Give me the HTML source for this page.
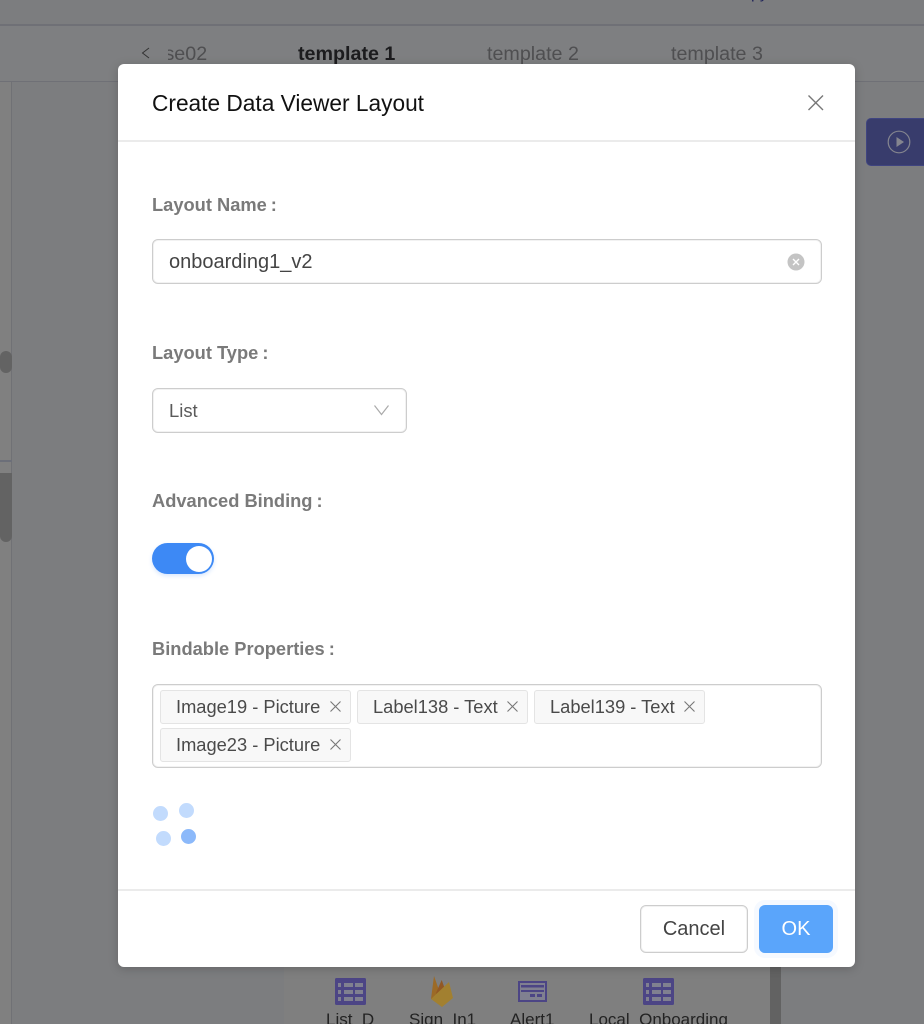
<!DOCTYPE html>
<html>
<head>
<meta charset="utf-8">
<style>
html,body{margin:0;padding:0;width:924px;height:1024px;overflow:hidden;}
#root{width:924px;height:1024px;position:relative;overflow:hidden;background:#7c7d7f;font-family:"Liberation Sans",sans-serif;}
.a{position:absolute;white-space:nowrap;}
.lab{left:152px;font-size:18.3px;font-weight:bold;color:#7a7a7a;line-height:22px;}
.box{position:absolute;box-sizing:border-box;background:#fff;border:1px solid #cdcdcd;box-shadow:inset 0 0 0 1px #f2f2f2;border-radius:6px;}
.tag{position:absolute;box-sizing:border-box;height:34px;background:#f8f8f8;border:1px solid #e4e4e4;border-radius:3px;font-size:18.3px;color:#4a4a4a;line-height:32px;padding-left:15px;white-space:nowrap;}
.tag svg{position:absolute;top:9px;right:8px;}
.dot{position:absolute;width:15px;height:15px;border-radius:50%;background:#c2dbfd;}
.tab{font-size:19.7px;line-height:24px;color:#4f4f51;top:42px;}
.bl{top:1010px;font-size:17px;line-height:20px;color:#232323;}
</style>
</head>
<body>
<div id="root">
<!-- background -->
<div class="a" style="left:0;top:24px;width:924px;height:2px;background:#6f7076;"></div>
<div class="a" style="left:0;top:26px;width:924px;height:55px;background:#7e7f81;"></div>
<div class="a" style="left:0;top:81px;width:924px;height:1px;background:#6f7076;"></div>
<div class="a" style="left:0;top:82px;width:11px;height:942px;background:#808080;"></div>
<div class="a" style="left:11px;top:82px;width:1px;height:942px;background:#707175;"></div>
<div class="a" style="left:0;top:351px;width:12px;height:22px;background:#636363;border-radius:6px;"></div>
<div class="a" style="left:0;top:460px;width:12px;height:2px;background:#6c6f79;"></div>
<div class="a" style="left:0;top:473px;width:12px;height:69px;background:#636363;border-radius:0 0 6px 6px;"></div>
<div class="a" style="left:751px;top:-14px;font-size:16px;color:#20245a;line-height:1;">py</div>

<svg class="a" style="left:140px;top:46px;" width="12" height="16" viewBox="0 0 12 16"><path d="M9 2L2.5 7L9 12" fill="none" stroke="#333" stroke-width="1"/></svg>
<div class="a tab" style="left:168px;width:40px;overflow:hidden;"><span style="margin-left:-14.5px;">ase02</span></div>
<div class="a tab" style="left:298px;font-weight:bold;color:#1c1c1e;">template 1</div>
<div class="a tab" style="left:487px;">template 2</div>
<div class="a tab" style="left:671px;">template 3</div>

<div class="a" style="left:866px;top:118px;width:70px;height:48px;background:#383c6c;border-radius:5px;box-sizing:border-box;border:1px solid #3f4480;"></div>
<svg class="a" style="left:887px;top:130px;" width="24" height="24" viewBox="0 0 24 24"><circle cx="12" cy="12" r="10.8" fill="none" stroke="#84858f" stroke-width="1.2"/><path d="M9.5 7L17 12L9.5 17Z" fill="#84858f"/></svg>

<!-- bottom area -->
<div class="a" style="left:284px;top:960px;width:486px;height:64px;background:#7f7f7f;"></div>
<div class="a" style="left:770px;top:960px;width:11px;height:64px;background:#626262;"></div>
<svg class="a" style="left:335px;top:978px;" width="31" height="28" viewBox="0 0 31 28"><rect width="31" height="27" rx="1.5" fill="#4c4585"/><g fill="#808090"><rect x="3" y="5" width="3" height="4"/><rect x="9" y="5" width="9" height="4"/><rect x="20" y="5" width="8" height="4"/><rect x="3" y="12" width="3" height="4"/><rect x="9" y="12" width="9" height="4"/><rect x="20" y="12" width="8" height="4"/><rect x="3" y="19" width="3" height="4"/><rect x="9" y="19" width="9" height="4"/><rect x="20" y="19" width="8" height="4"/></g></svg>
<svg class="a" style="left:430px;top:975px;" width="24" height="33" viewBox="0 0 24 33"><path d="M1 24L4 1L10 18L8 26Z" fill="#9c6a26"/><path d="M6 18L11.7 5L16 17L10 27Z" fill="#925824"/><path d="M1 24L19 7L23 23L12 32Z" fill="#a28030"/></svg>
<svg class="a" style="left:518px;top:981px;" width="29" height="21" viewBox="0 0 29 21"><rect x="1" y="1" width="27" height="19" fill="#808090" stroke="#4c4585" stroke-width="2"/><rect x="3" y="4" width="23" height="2.5" fill="#4c4585"/><rect x="3" y="9" width="23" height="2" fill="#4c4585"/><rect x="12" y="13" width="5" height="3" fill="#4c4585"/><rect x="19" y="13" width="5" height="3" fill="#4c4585"/></svg>
<svg class="a" style="left:643px;top:978px;" width="31" height="28" viewBox="0 0 31 28"><rect width="31" height="27" rx="1.5" fill="#4c4585"/><g fill="#808090"><rect x="3" y="5" width="3" height="4"/><rect x="9" y="5" width="9" height="4"/><rect x="20" y="5" width="8" height="4"/><rect x="3" y="12" width="3" height="4"/><rect x="9" y="12" width="9" height="4"/><rect x="20" y="12" width="8" height="4"/><rect x="3" y="19" width="3" height="4"/><rect x="9" y="19" width="9" height="4"/><rect x="20" y="19" width="8" height="4"/></g></svg>
<div class="a bl" style="left:326px;">List_D</div>
<div class="a bl" style="left:409px;">Sign_In1</div>
<div class="a bl" style="left:510px;">Alert1</div>
<div class="a bl" style="left:589px;">Local_Onboarding</div>

<!-- modal -->
<div class="a" style="left:118px;top:64px;width:737px;height:903px;background:#fff;border-radius:6px;box-shadow:0 2px 10px rgba(0,0,0,.18);"></div>
<div class="a" style="left:152px;top:90px;font-size:22.7px;line-height:27px;color:#111;">Create Data Viewer Layout</div>
<svg class="a" style="left:806px;top:93px;" width="20" height="20" viewBox="0 0 20 20"><path d="M2.5 2.5L17 17M17 2.5L2.5 17" fill="none" stroke="#777" stroke-width="1.4"/></svg>
<div class="a" style="left:118px;top:140px;width:737px;height:2px;background:#ebebeb;"></div>

<div class="a lab" style="top:194px;">Layout Name<span style="margin-left:4px;">:</span></div>
<div class="box" style="left:152px;top:239px;width:670px;height:45px;"></div>
<div class="a" style="left:169px;top:250px;font-size:20px;line-height:25px;color:#444;">onboarding1_v2</div>
<svg class="a" style="left:787px;top:253px;" width="18" height="18" viewBox="0 0 18 18"><circle cx="9" cy="9" r="8.5" fill="#c4c4c4"/><path d="M6 6L12 12M12 6L6 12" stroke="#fff" stroke-width="1.4" fill="none"/></svg>

<div class="a lab" style="top:342px;">Layout Type<span style="margin-left:4px;">:</span></div>
<div class="box" style="left:152px;top:388px;width:255px;height:45px;"></div>
<div class="a" style="left:169px;top:399px;font-size:18.4px;line-height:23px;color:#5a5a5a;">List</div>
<svg class="a" style="left:373px;top:403px;" width="17" height="14" viewBox="0 0 17 14"><path d="M1.5 2.5L8.5 11.5L15.5 2.5" fill="none" stroke="#aaa" stroke-width="1.2"/></svg>

<div class="a lab" style="top:490px;">Advanced Binding<span style="margin-left:4px;">:</span></div>
<div class="a" style="left:152px;top:543px;width:62px;height:31px;border-radius:16px;background:#3d89f5;box-shadow:0 2px 4px rgba(61,137,245,.2);"></div>
<div class="a" style="left:186px;top:546px;width:26px;height:26px;border-radius:50%;background:#fff;"></div>

<div class="a lab" style="top:638px;">Bindable Properties<span style="margin-left:4px;">:</span></div>
<div class="box" style="left:152px;top:684px;width:670px;height:84px;"></div>
<div class="tag" style="left:160px;top:690px;width:191px;">Image19 - Picture<svg width="13" height="13" viewBox="0 0 13 13"><path d="M1.5 1.5L11.5 11.5M11.5 1.5L1.5 11.5" stroke="#777" stroke-width="1.1" fill="none"/></svg></div>
<div class="tag" style="left:357px;top:690px;width:171px;">Label138 - Text<svg width="13" height="13" viewBox="0 0 13 13"><path d="M1.5 1.5L11.5 11.5M11.5 1.5L1.5 11.5" stroke="#777" stroke-width="1.1" fill="none"/></svg></div>
<div class="tag" style="left:534px;top:690px;width:171px;">Label139 - Text<svg width="13" height="13" viewBox="0 0 13 13"><path d="M1.5 1.5L11.5 11.5M11.5 1.5L1.5 11.5" stroke="#777" stroke-width="1.1" fill="none"/></svg></div>
<div class="tag" style="left:160px;top:728px;width:191px;">Image23 - Picture<svg width="13" height="13" viewBox="0 0 13 13"><path d="M1.5 1.5L11.5 11.5M11.5 1.5L1.5 11.5" stroke="#777" stroke-width="1.1" fill="none"/></svg></div>

<div class="dot" style="left:153px;top:806px;"></div>
<div class="dot" style="left:179px;top:803px;"></div>
<div class="dot" style="left:156px;top:831px;"></div>
<div class="dot" style="left:181px;top:829px;background:#8cb9fa;"></div>

<div class="a" style="left:118px;top:889px;width:737px;height:2px;background:#ebebeb;"></div>
<div class="box" style="left:640px;top:905px;width:108px;height:48px;border-radius:6px;"></div>
<div class="a" style="left:640px;top:905px;width:108px;text-align:center;font-size:20px;line-height:48px;color:#444;">Cancel</div>
<div class="a" style="left:759px;top:905px;width:74px;height:48px;border-radius:6px;background:#5aa5fb;box-shadow:0 0 0 5px #f5f9ff;text-align:center;font-size:20px;line-height:48px;color:#fff;">OK</div>
</div>
</body>
</html>
